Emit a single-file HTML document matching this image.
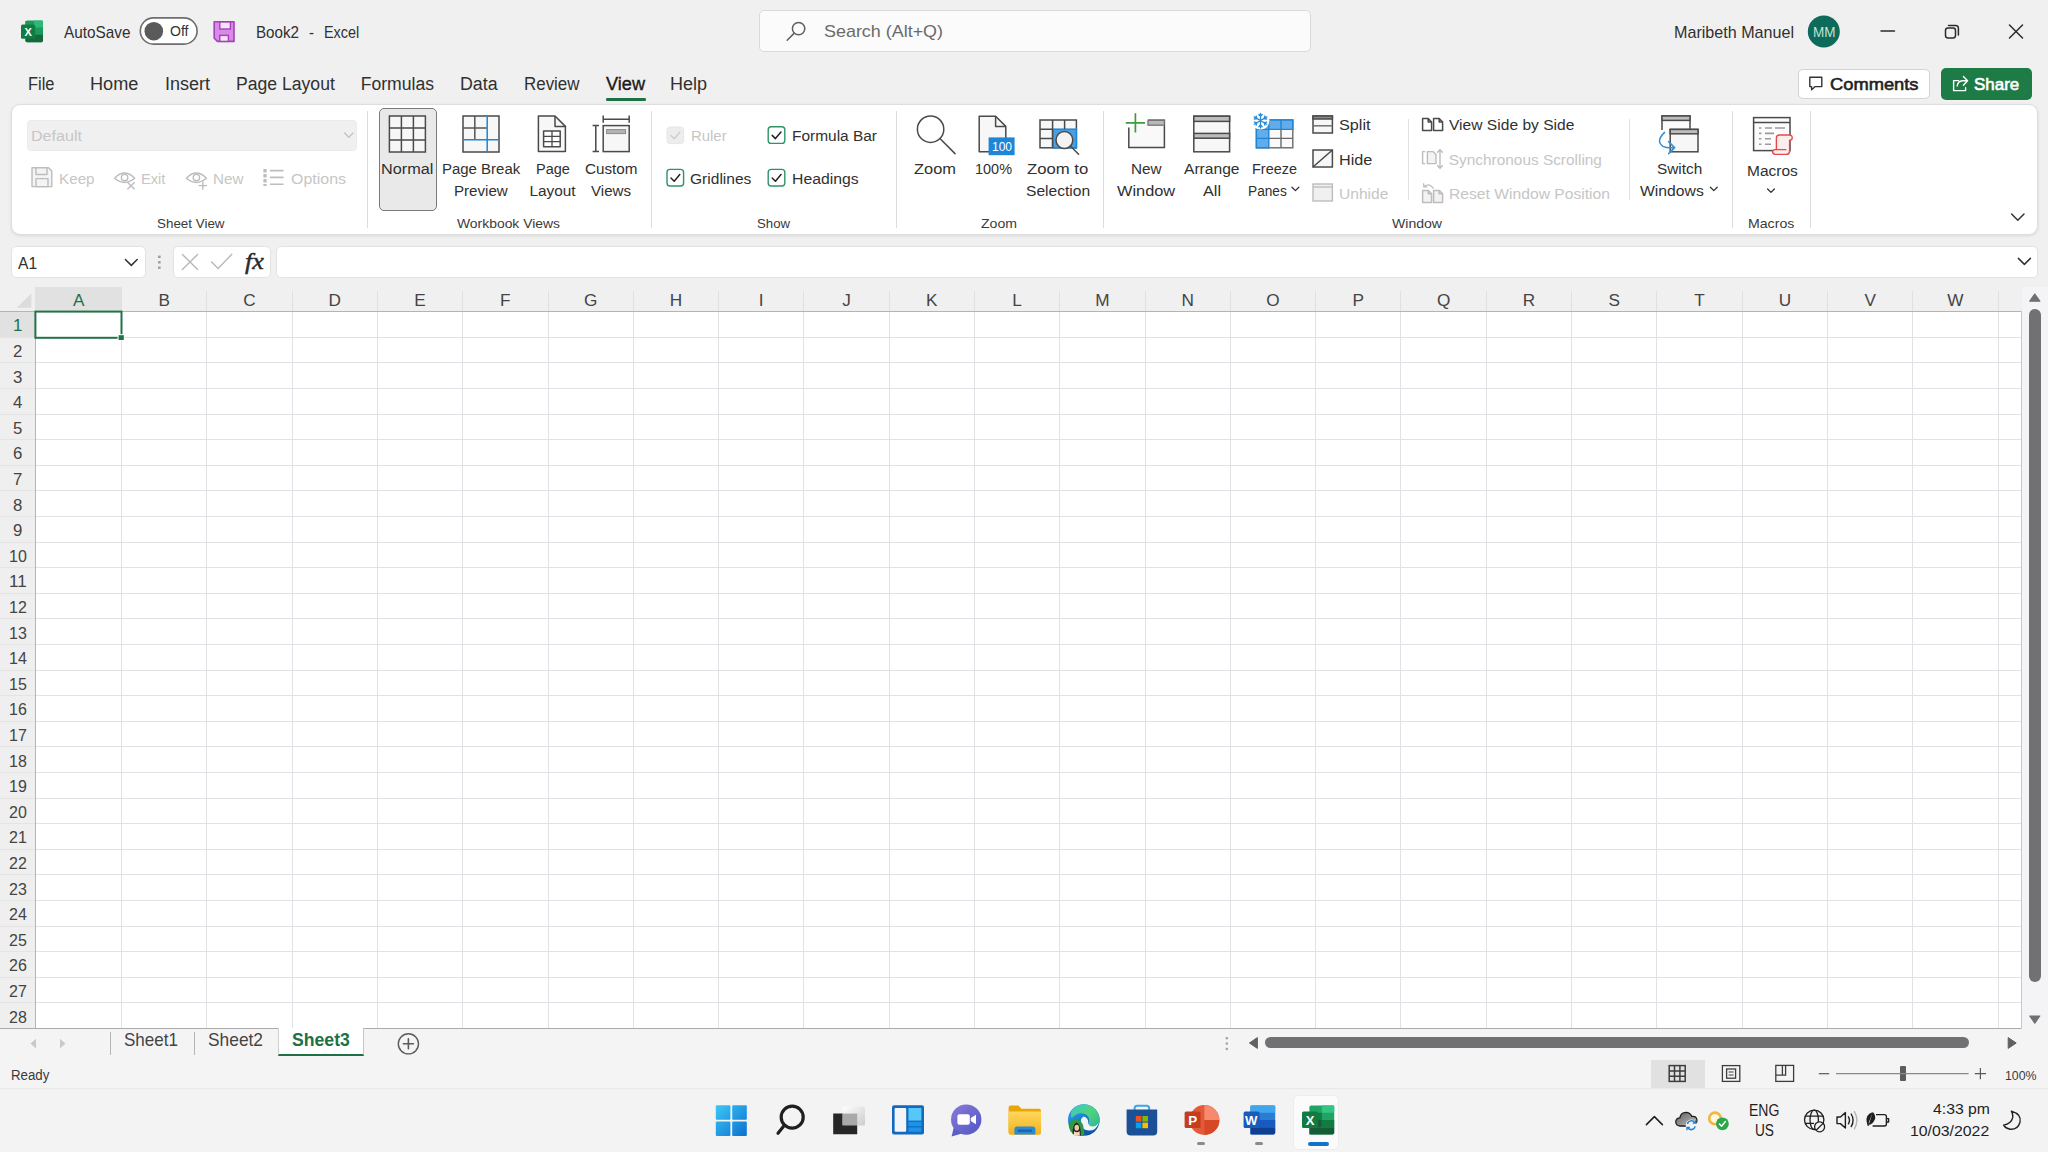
<!DOCTYPE html>
<html lang="en"><head><meta charset="utf-8"><title>Book2 - Excel</title>
<style>
html,body{margin:0;padding:0;}
body{width:2048px;height:1152px;overflow:hidden;background:#f0f0f0;font-family:"Liberation Sans", sans-serif;position:relative;}
#app{position:absolute;left:0;top:0;width:2048px;height:1152px;overflow:hidden;}
#app div{position:absolute;box-sizing:border-box;}
#app span{position:absolute;white-space:nowrap;line-height:1;transform-origin:0 50%;}
#ov{position:absolute;left:0;top:0;}
</style></head><body><div id="app">
<div style="left:0px;top:0px;width:2048px;height:104px;background:#f0f0f0;"></div>
<div style="left:11px;top:104px;width:2026.5px;height:131px;background:#ffffff;border-radius:9px;border:1px solid #dedede;box-shadow:0 1px 3px rgba(0,0,0,0.10);"></div>
<div style="left:11px;top:246px;width:134.5px;height:31.5px;background:#ffffff;border-radius:5px;border:1px solid #e3e3e3;"></div>
<div style="left:173px;top:246px;width:97.5px;height:31.5px;background:#ffffff;border-radius:5px;border:1px solid #e3e3e3;"></div>
<div style="left:276px;top:246px;width:1761.5px;height:31.5px;background:#ffffff;border-radius:5px;border:1px solid #e3e3e3;"></div>
<div style="left:0px;top:287px;width:2021px;height:24.75px;background:#f0f0f0;"></div>
<div style="left:0px;top:311.75px;width:35.5px;height:716.75px;background:#efefef;"></div>
<div style="left:35.5px;top:311.75px;width:1985.5px;height:716.75px;background:#ffffff;"></div>
<div style="left:35px;top:287px;width:87px;height:24.75px;background:#e1e1e1;"></div>
<div style="left:0px;top:311.75px;width:35.5px;height:25.6px;background:#e1e1e1;"></div>
<div style="left:2021.5px;top:287px;width:27px;height:742px;background:#f4f3f5;"></div>
<div style="left:35.5px;top:337px;width:1985.5px;height:1px;background:#e2e1e5;"></div>
<div style="left:0px;top:337px;width:35.5px;height:1px;background:#e4e4e4;"></div>
<div style="left:35.5px;top:362px;width:1985.5px;height:1px;background:#e2e1e5;"></div>
<div style="left:0px;top:362px;width:35.5px;height:1px;background:#e4e4e4;"></div>
<div style="left:35.5px;top:388px;width:1985.5px;height:1px;background:#e2e1e5;"></div>
<div style="left:0px;top:388px;width:35.5px;height:1px;background:#e4e4e4;"></div>
<div style="left:35.5px;top:414px;width:1985.5px;height:1px;background:#e2e1e5;"></div>
<div style="left:0px;top:414px;width:35.5px;height:1px;background:#e4e4e4;"></div>
<div style="left:35.5px;top:439px;width:1985.5px;height:1px;background:#e2e1e5;"></div>
<div style="left:0px;top:439px;width:35.5px;height:1px;background:#e4e4e4;"></div>
<div style="left:35.5px;top:465px;width:1985.5px;height:1px;background:#e2e1e5;"></div>
<div style="left:0px;top:465px;width:35.5px;height:1px;background:#e4e4e4;"></div>
<div style="left:35.5px;top:490px;width:1985.5px;height:1px;background:#e2e1e5;"></div>
<div style="left:0px;top:490px;width:35.5px;height:1px;background:#e4e4e4;"></div>
<div style="left:35.5px;top:516px;width:1985.5px;height:1px;background:#e2e1e5;"></div>
<div style="left:0px;top:516px;width:35.5px;height:1px;background:#e4e4e4;"></div>
<div style="left:35.5px;top:542px;width:1985.5px;height:1px;background:#e2e1e5;"></div>
<div style="left:0px;top:542px;width:35.5px;height:1px;background:#e4e4e4;"></div>
<div style="left:35.5px;top:567px;width:1985.5px;height:1px;background:#e2e1e5;"></div>
<div style="left:0px;top:567px;width:35.5px;height:1px;background:#e4e4e4;"></div>
<div style="left:35.5px;top:593px;width:1985.5px;height:1px;background:#e2e1e5;"></div>
<div style="left:0px;top:593px;width:35.5px;height:1px;background:#e4e4e4;"></div>
<div style="left:35.5px;top:618px;width:1985.5px;height:1px;background:#e2e1e5;"></div>
<div style="left:0px;top:618px;width:35.5px;height:1px;background:#e4e4e4;"></div>
<div style="left:35.5px;top:644px;width:1985.5px;height:1px;background:#e2e1e5;"></div>
<div style="left:0px;top:644px;width:35.5px;height:1px;background:#e4e4e4;"></div>
<div style="left:35.5px;top:670px;width:1985.5px;height:1px;background:#e2e1e5;"></div>
<div style="left:0px;top:670px;width:35.5px;height:1px;background:#e4e4e4;"></div>
<div style="left:35.5px;top:695px;width:1985.5px;height:1px;background:#e2e1e5;"></div>
<div style="left:0px;top:695px;width:35.5px;height:1px;background:#e4e4e4;"></div>
<div style="left:35.5px;top:721px;width:1985.5px;height:1px;background:#e2e1e5;"></div>
<div style="left:0px;top:721px;width:35.5px;height:1px;background:#e4e4e4;"></div>
<div style="left:35.5px;top:746px;width:1985.5px;height:1px;background:#e2e1e5;"></div>
<div style="left:0px;top:746px;width:35.5px;height:1px;background:#e4e4e4;"></div>
<div style="left:35.5px;top:772px;width:1985.5px;height:1px;background:#e2e1e5;"></div>
<div style="left:0px;top:772px;width:35.5px;height:1px;background:#e4e4e4;"></div>
<div style="left:35.5px;top:798px;width:1985.5px;height:1px;background:#e2e1e5;"></div>
<div style="left:0px;top:798px;width:35.5px;height:1px;background:#e4e4e4;"></div>
<div style="left:35.5px;top:823px;width:1985.5px;height:1px;background:#e2e1e5;"></div>
<div style="left:0px;top:823px;width:35.5px;height:1px;background:#e4e4e4;"></div>
<div style="left:35.5px;top:849px;width:1985.5px;height:1px;background:#e2e1e5;"></div>
<div style="left:0px;top:849px;width:35.5px;height:1px;background:#e4e4e4;"></div>
<div style="left:35.5px;top:874px;width:1985.5px;height:1px;background:#e2e1e5;"></div>
<div style="left:0px;top:874px;width:35.5px;height:1px;background:#e4e4e4;"></div>
<div style="left:35.5px;top:900px;width:1985.5px;height:1px;background:#e2e1e5;"></div>
<div style="left:0px;top:900px;width:35.5px;height:1px;background:#e4e4e4;"></div>
<div style="left:35.5px;top:926px;width:1985.5px;height:1px;background:#e2e1e5;"></div>
<div style="left:0px;top:926px;width:35.5px;height:1px;background:#e4e4e4;"></div>
<div style="left:35.5px;top:951px;width:1985.5px;height:1px;background:#e2e1e5;"></div>
<div style="left:0px;top:951px;width:35.5px;height:1px;background:#e4e4e4;"></div>
<div style="left:35.5px;top:977px;width:1985.5px;height:1px;background:#e2e1e5;"></div>
<div style="left:0px;top:977px;width:35.5px;height:1px;background:#e4e4e4;"></div>
<div style="left:35.5px;top:1002px;width:1985.5px;height:1px;background:#e2e1e5;"></div>
<div style="left:0px;top:1002px;width:35.5px;height:1px;background:#e4e4e4;"></div>
<div style="left:121px;top:311.75px;width:1px;height:716.75px;background:#e2e1e5;"></div>
<div style="left:121px;top:291px;width:1px;height:20.75px;background:#e0e0e0;"></div>
<div style="left:206px;top:311.75px;width:1px;height:716.75px;background:#e2e1e5;"></div>
<div style="left:206px;top:291px;width:1px;height:20.75px;background:#e0e0e0;"></div>
<div style="left:292px;top:311.75px;width:1px;height:716.75px;background:#e2e1e5;"></div>
<div style="left:292px;top:291px;width:1px;height:20.75px;background:#e0e0e0;"></div>
<div style="left:377px;top:311.75px;width:1px;height:716.75px;background:#e2e1e5;"></div>
<div style="left:377px;top:291px;width:1px;height:20.75px;background:#e0e0e0;"></div>
<div style="left:462px;top:311.75px;width:1px;height:716.75px;background:#e2e1e5;"></div>
<div style="left:462px;top:291px;width:1px;height:20.75px;background:#e0e0e0;"></div>
<div style="left:548px;top:311.75px;width:1px;height:716.75px;background:#e2e1e5;"></div>
<div style="left:548px;top:291px;width:1px;height:20.75px;background:#e0e0e0;"></div>
<div style="left:633px;top:311.75px;width:1px;height:716.75px;background:#e2e1e5;"></div>
<div style="left:633px;top:291px;width:1px;height:20.75px;background:#e0e0e0;"></div>
<div style="left:718px;top:311.75px;width:1px;height:716.75px;background:#e2e1e5;"></div>
<div style="left:718px;top:291px;width:1px;height:20.75px;background:#e0e0e0;"></div>
<div style="left:803px;top:311.75px;width:1px;height:716.75px;background:#e2e1e5;"></div>
<div style="left:803px;top:291px;width:1px;height:20.75px;background:#e0e0e0;"></div>
<div style="left:889px;top:311.75px;width:1px;height:716.75px;background:#e2e1e5;"></div>
<div style="left:889px;top:291px;width:1px;height:20.75px;background:#e0e0e0;"></div>
<div style="left:974px;top:311.75px;width:1px;height:716.75px;background:#e2e1e5;"></div>
<div style="left:974px;top:291px;width:1px;height:20.75px;background:#e0e0e0;"></div>
<div style="left:1059px;top:311.75px;width:1px;height:716.75px;background:#e2e1e5;"></div>
<div style="left:1059px;top:291px;width:1px;height:20.75px;background:#e0e0e0;"></div>
<div style="left:1145px;top:311.75px;width:1px;height:716.75px;background:#e2e1e5;"></div>
<div style="left:1145px;top:291px;width:1px;height:20.75px;background:#e0e0e0;"></div>
<div style="left:1230px;top:311.75px;width:1px;height:716.75px;background:#e2e1e5;"></div>
<div style="left:1230px;top:291px;width:1px;height:20.75px;background:#e0e0e0;"></div>
<div style="left:1315px;top:311.75px;width:1px;height:716.75px;background:#e2e1e5;"></div>
<div style="left:1315px;top:291px;width:1px;height:20.75px;background:#e0e0e0;"></div>
<div style="left:1400px;top:311.75px;width:1px;height:716.75px;background:#e2e1e5;"></div>
<div style="left:1400px;top:291px;width:1px;height:20.75px;background:#e0e0e0;"></div>
<div style="left:1486px;top:311.75px;width:1px;height:716.75px;background:#e2e1e5;"></div>
<div style="left:1486px;top:291px;width:1px;height:20.75px;background:#e0e0e0;"></div>
<div style="left:1571px;top:311.75px;width:1px;height:716.75px;background:#e2e1e5;"></div>
<div style="left:1571px;top:291px;width:1px;height:20.75px;background:#e0e0e0;"></div>
<div style="left:1656px;top:311.75px;width:1px;height:716.75px;background:#e2e1e5;"></div>
<div style="left:1656px;top:291px;width:1px;height:20.75px;background:#e0e0e0;"></div>
<div style="left:1742px;top:311.75px;width:1px;height:716.75px;background:#e2e1e5;"></div>
<div style="left:1742px;top:291px;width:1px;height:20.75px;background:#e0e0e0;"></div>
<div style="left:1827px;top:311.75px;width:1px;height:716.75px;background:#e2e1e5;"></div>
<div style="left:1827px;top:291px;width:1px;height:20.75px;background:#e0e0e0;"></div>
<div style="left:1912px;top:311.75px;width:1px;height:716.75px;background:#e2e1e5;"></div>
<div style="left:1912px;top:291px;width:1px;height:20.75px;background:#e0e0e0;"></div>
<div style="left:1998px;top:311.75px;width:1px;height:716.75px;background:#e2e1e5;"></div>
<div style="left:1998px;top:291px;width:1px;height:20.75px;background:#e0e0e0;"></div>
<div style="left:0px;top:311px;width:2021px;height:1px;background:#b4b4b4;"></div>
<div style="left:35px;top:311px;width:1px;height:717.5px;background:#b4b4b4;"></div>
<div style="left:2020.5px;top:311px;width:1px;height:717.5px;background:#c8c8c8;"></div>
<div style="left:0px;top:1028px;width:2021px;height:1px;background:#ababab;"></div>
<div style="left:0px;top:1029px;width:2048px;height:30px;background:#f5f4f5;"></div>
<div style="left:0px;top:1059px;width:2048px;height:30px;background:#f5f4f5;"></div>
<div style="left:0px;top:1088px;width:2048px;height:1px;background:#e9e9ea;"></div>
<div style="left:0px;top:1089.5px;width:2048px;height:63px;background:#f3f3f4;"></div>
<div style="left:759px;top:10px;width:551.5px;height:41.5px;background:#fbfbfb;border-radius:5px;border:1px solid #dadada;"></div>
<div style="left:606px;top:98px;width:40px;height:2.6px;background:#1e7145;border-radius:1.3px;"></div>
<div style="left:1797.5px;top:68.5px;width:132.5px;height:30.5px;background:#ffffff;border-radius:5px;border:1px solid #d4d4d4;"></div>
<div style="left:1941px;top:67.5px;width:91px;height:32px;background:#1d7c46;border-radius:5px;"></div>
<div style="left:2029px;top:308.5px;width:12px;height:673.2px;background:#717073;border-radius:6px;"></div>
<div style="left:1265px;top:1037px;width:704px;height:11px;background:#717073;border-radius:5.5px;"></div>
<div style="left:110px;top:1032px;width:1px;height:22.5px;background:#b5b5b5;"></div>
<div style="left:194px;top:1032px;width:1px;height:22.5px;background:#b5b5b5;"></div>
<div style="left:278px;top:1028px;width:85.5px;height:28px;background:#ffffff;border-left:1px solid #cfcfcf;border-right:1px solid #c6c6c6;border-bottom:2.5px solid #1e7145;"></div>
<div style="left:1651px;top:1060px;width:54px;height:28px;background:#e1e1e1;"></div>
<div style="left:1899.6px;top:1066px;width:6.2px;height:15.4px;background:#5c5c5c;border-radius:1px;"></div>
<div style="left:367px;top:111px;width:1px;height:117px;background:#dcdcdc;"></div>
<div style="left:651px;top:111px;width:1px;height:117px;background:#dcdcdc;"></div>
<div style="left:896px;top:111px;width:1px;height:117px;background:#dcdcdc;"></div>
<div style="left:1103px;top:111px;width:1px;height:117px;background:#dcdcdc;"></div>
<div style="left:1732.3px;top:111px;width:1px;height:117px;background:#dcdcdc;"></div>
<div style="left:1810.1px;top:111px;width:1px;height:117px;background:#dcdcdc;"></div>
<div style="left:1407.5px;top:119px;width:1px;height:81px;background:#e2e2e2;"></div>
<div style="left:1629.1px;top:119px;width:1px;height:81px;background:#e2e2e2;"></div>
<div style="left:27px;top:119.5px;width:330px;height:31px;background:#f1f0f1;border-radius:4px;border:1px solid #ebebeb;"></div>
<div style="left:378.6px;top:108px;width:58.5px;height:102.6px;background:#e9e9e9;border-radius:5px;border:1.2px solid #7a7a7a;"></div>
<div style="left:1197px;top:1141.6px;width:8px;height:3.4px;background:#8b8b8b;border-radius:2px;"></div>
<div style="left:1255.4px;top:1141.6px;width:8px;height:3.4px;background:#8b8b8b;border-radius:2px;"></div>
<div style="left:1293px;top:1095px;width:46.4px;height:55px;background:#fbfbfb;border-radius:5px;border:1px solid #ececec;"></div>
<div style="left:1307.6px;top:1141.6px;width:21.4px;height:4px;background:#1273cc;border-radius:2px;"></div>
<svg id="ov" width="2048" height="1152" viewBox="0 0 2048 1152">
<path d="M31.4 293.2 L31.4 307.8 L16.8 307.8 Z" fill="#dcdcdc"/>
<rect x="35.4" y="311.6" width="86.1" height="26.2" fill="none" stroke="#217346" stroke-width="2"/><rect x="117.6" y="334.2" width="6.8" height="6.4" fill="#ffffff"/><rect x="118.6" y="335.2" width="5.2" height="4.8" fill="#217346"/>
<g><rect x="25.4" y="20.6" width="17.6" height="21.6" rx="1.6" fill="#1c9a5c"/><rect x="34" y="20.6" width="9" height="7.2" fill="#2db877"/><rect x="25.4" y="21" width="8.6" height="6.8" fill="#1c9a5c"/><rect x="25.4" y="27.6" width="8.6" height="7.2" fill="#107c41"/><rect x="34" y="27.6" width="9" height="7.2" fill="#1c9a5c"/><path d="M25.4 34.8 H43 V40.6 Q43 42.2 41.4 42.2 H27 Q25.4 42.2 25.4 40.6 Z" fill="#17683c"/><rect x="21" y="24.4" width="14.2" height="14.4" rx="1.5" fill="#107c41"/></g>
<rect x="140.3" y="17.9" width="56.8" height="26.2" rx="13.1" fill="#ffffff" stroke="#6e6e6e" stroke-width="1.6"/>
<circle cx="153.8" cy="31.2" r="9.3" fill="#5a5a5a"/>
<g><path d="M214.2 21.7 H234 V41.4 H217.4 L214.2 38.2 Z" fill="#d88ae8" stroke="#a740ba" stroke-width="1.6" stroke-linejoin="round"/><rect x="219.8" y="22" width="10.6" height="7" fill="#f3e6f7" stroke="#a740ba" stroke-width="1.4"/><rect x="219.8" y="35.4" width="8.6" height="6" fill="#f3e6f7" stroke="#a740ba" stroke-width="1.4"/></g>
<g fill="none" stroke="#5f5f5f" stroke-width="1.5"><circle cx="798.6" cy="28.6" r="6.2"/><path d="M794 33.4 L787.2 40.2" stroke-linecap="round"/></g>
<circle cx="1823.8" cy="31.5" r="16" fill="#0e6a5b"/>
<g fill="none" stroke="#2b2b2b" stroke-width="1.5" stroke-linecap="round"><path d="M1881 31 H1894.5"/><rect x="1945.5" y="28" width="10" height="10" rx="2.4"/><path d="M1948.5 25.4 H1955.6 Q1958.4 25.4 1958.4 28.2 V35"/><path d="M2009.5 25 L2022.5 38 M2022.5 25 L2009.5 38"/></g>
<path d="M1809.8 77.2 H1821.8 V86.6 H1815.2 L1811.6 89.8 V86.6 H1809.8 Z" fill="none" stroke="#333" stroke-width="1.4" stroke-linejoin="round"/>
<g fill="none" stroke="#ffffff" stroke-width="1.4" stroke-linejoin="round" stroke-linecap="round"><path d="M1958.6 80.6 H1953.6 V90.6 H1965.6 V87.8"/><path d="M1963.4 76.4 L1967.6 80.8 L1963.4 85.2 M1967 80.8 H1962.4 Q1957.8 81.2 1957.2 86"/></g>
<path d="M125.4 259.5 L131.3 265.4 L137.2 259.5" fill="none" stroke="#333" stroke-width="1.5" stroke-linecap="round" stroke-linejoin="round"/>
<g fill="#9c9c9c"><rect x="158.1" y="255.6" width="2.5" height="2.4"/><rect x="158.1" y="261.1" width="2.5" height="2.4"/><rect x="158.1" y="266.5" width="2.5" height="2.4"/></g>
<g fill="none" stroke="#b9b9b9" stroke-width="1.4" stroke-linecap="round" stroke-linejoin="round"><path d="M182.4 254.4 L197.6 269.6 M197.6 254.4 L182.4 269.6"/><path d="M211.6 262 L218.1 268.6 L231.8 254.2"/></g>
<path d="M2018.4 258.4 L2024.4 264.4 L2030.4 258.4" fill="none" stroke="#333" stroke-width="1.5" stroke-linecap="round" stroke-linejoin="round"/>
<path d="M2029.8 301.2 L2034.8 294 L2039.8 301.2 Z" fill="#707070" stroke="#707070" stroke-width="1.2" stroke-linejoin="round"/>
<path d="M2029.8 1016 L2034.8 1023.2 L2039.8 1016 Z" fill="#707070" stroke="#707070" stroke-width="1.2" stroke-linejoin="round"/>
<g fill="#a6a6a6"><rect x="1225.7" y="1037" width="2.3" height="2.3"/><rect x="1225.7" y="1042.4" width="2.3" height="2.3"/><rect x="1225.7" y="1047.8" width="2.3" height="2.3"/></g>
<path d="M1257.4 1037.6 L1249.4 1043 L1257.4 1048.4 Z" fill="#606060" stroke="#606060" stroke-width="1" stroke-linejoin="round"/>
<path d="M2008.2 1037.6 L2016.2 1043 L2008.2 1048.4 Z" fill="#606060" stroke="#606060" stroke-width="1" stroke-linejoin="round"/>
<path d="M36 1038.8 L30.6 1043.6 L36 1048.4 Z" fill="#c9c9c9"/><path d="M60 1038.8 L65.4 1043.6 L60 1048.4 Z" fill="#c9c9c9"/>
<g fill="none" stroke="#5b5b5b" stroke-width="1.4" stroke-linecap="round"><circle cx="408.4" cy="1043.8" r="10.1"/><path d="M403.4 1043.8 H413.4 M408.4 1038.8 V1048.8" stroke-width="1.6"/></g>
<g fill="none" stroke="#3d3d3d" stroke-width="1.5"><rect x="1669.2" y="1065.6" width="16" height="15.8"/><path d="M1674.5 1065.6 V1081.4 M1679.9 1065.6 V1081.4 M1669.2 1070.9 H1685.2 M1669.2 1076.2 H1685.2"/></g>
<g fill="none" stroke="#3d3d3d" stroke-width="1.3"><rect x="1722.4" y="1065.6" width="17.4" height="15.8"/><rect x="1726.6" y="1069" width="9" height="9.2"/><path d="M1728.6 1072 H1733.6 M1728.6 1075 H1733.6" stroke-width="1"/></g>
<g fill="none" stroke="#3d3d3d" stroke-width="1.3"><rect x="1775.8" y="1065.4" width="17.8" height="16"/><path d="M1782.4 1065.4 V1075.2 M1785.6 1065.4 V1075.2 H1775.8" /></g>
<g fill="none" stroke="#5a5a5a" stroke-width="1.2"><path d="M1818.8 1073.7 H1829.2"/><path d="M1836 1073.7 H1968.6" stroke="#8a8a8a"/><path d="M1974.8 1073.7 H1986 M1980.4 1068.1 V1079.3"/></g>
<path d="M2011.6 214 L2017.8 220.2 L2024 214" fill="none" stroke="#333" stroke-width="1.5" stroke-linecap="round" stroke-linejoin="round"/>
<path d="M344.6 133 L348.8 137.2 L353 133" fill="none" stroke="#c2c2c2" stroke-width="1.3" stroke-linecap="round" stroke-linejoin="round"/>
<g fill="#f4f4f4" stroke="#bdbdbd" stroke-width="1.4" stroke-linejoin="round"><path d="M32 167.7 H48.6 L51.8 170.9 V186.6 H32 Z"/><rect x="36" y="167.9" width="11" height="6.6"/><rect x="36" y="178.6" width="12" height="8"/></g>
<path d="M114.6 178.2 Q124.6 167.7 134.6 178.2 Q124.6 186.6 114.6 178.2 Z" fill="none" stroke="#bdbdbd" stroke-width="1.4" stroke-linejoin="round"/><circle cx="124.6" cy="177.6" r="3.2" fill="none" stroke="#bdbdbd" stroke-width="1.4"/><path d="M127.4 182.2 L134.6 189.2 M134.6 182.2 L127.4 189.2" stroke="#bdbdbd" stroke-width="1.4" fill="none"/>
<path d="M186.4 178.2 Q196.4 167.7 206.4 178.2 Q196.4 186.6 186.4 178.2 Z" fill="none" stroke="#bdbdbd" stroke-width="1.4" stroke-linejoin="round"/><circle cx="196.4" cy="177.6" r="3.2" fill="none" stroke="#bdbdbd" stroke-width="1.4"/><path d="M198.6 185.6 H207 M202.8 181.4 V189.8" stroke="#bdbdbd" stroke-width="1.4" fill="none"/>
<g stroke="#bdbdbd" stroke-width="1.6" fill="none"><path d="M270 170.6 H283.6 M270 177.4 H283.6 M270 184.2 H283.6"/><path d="M265 169 V186" stroke-width="3.2" stroke-dasharray="3.6 1.4"/></g>
<g fill="#f7f7f7" stroke="#4a4a4a" stroke-width="1.5"><rect x="389.4" y="116" width="36" height="36"/><path d="M401.4 116 V152 M413.4 116 V152 M389.4 128 H425.4 M389.4 140 H425.4" fill="none"/></g>
<g fill="none" stroke-width="1.5"><rect x="463" y="116" width="36" height="36" fill="#f7f7f7" stroke="#4a4a4a"/><path d="M474.8 116 V139.8 M463 128 H487.2" stroke="#555"/><path d="M487.2 116 V152 M463 139.8 H499" stroke="#1e86d6"/></g>
<g fill="#f7f7f7" stroke="#4a4a4a" stroke-width="1.5" stroke-linejoin="round"><path d="M538.4 116 H555 L565.4 126.4 V151.6 H538.4 Z"/><path d="M555 116 V126.4 H565.4" fill="none"/><rect x="543.6" y="131" width="16.6" height="15.8" fill="#fff"/><path d="M552 131 V146.8 M543.6 136.3 H560.2 M543.6 141.6 H560.2" fill="none" stroke-width="1.3"/></g>
<g fill="none" stroke="#4a4a4a" stroke-width="1.5"><path d="M595.8 125.6 V151.6 M592.6 125.6 H599 M592.6 151.6 H599"/><path d="M603.2 119.2 H629.2 M603.2 115.6 V122.8 M629.2 115.6 V122.8"/><rect x="603.2" y="125.6" width="26" height="26" fill="#f7f7f7"/><rect x="606.6" y="129.6" width="19" height="4" fill="#b4b4b4" stroke="#8a8a8a" stroke-width="1"/></g>
<rect x="667" y="127" width="16.6" height="16.6" rx="3" fill="#ededed" stroke="#e6e6e6" stroke-width="1"/><path d="M671 135.6 L674.2 138.8 L679.8 132.2" fill="none" stroke="#cfcfcf" stroke-width="1.5" stroke-linecap="round" stroke-linejoin="round"/>
<rect x="768.2" y="126.8" width="16.6" height="16.6" rx="3" fill="#ffffff" stroke="#2e9468" stroke-width="1.4"/><path d="M772.2 135.4 L775.4000000000001 138.6 L781.0 132.0" fill="none" stroke="#222" stroke-width="1.5" stroke-linecap="round" stroke-linejoin="round"/>
<rect x="667" y="169.4" width="16.6" height="16.6" rx="3" fill="#ffffff" stroke="#2e9468" stroke-width="1.4"/><path d="M671 178.0 L674.2 181.20000000000002 L679.8 174.6" fill="none" stroke="#222" stroke-width="1.5" stroke-linecap="round" stroke-linejoin="round"/>
<rect x="768.2" y="169.4" width="16.6" height="16.6" rx="3" fill="#ffffff" stroke="#2e9468" stroke-width="1.4"/><path d="M772.2 178.0 L775.4000000000001 181.20000000000002 L781.0 174.6" fill="none" stroke="#222" stroke-width="1.5" stroke-linecap="round" stroke-linejoin="round"/>
<g fill="none" stroke="#4a4a4a" stroke-width="1.5" stroke-linecap="round"><circle cx="930.6" cy="129.2" r="13.2"/><path d="M940.2 138.8 L955 153.6"/></g>
<g fill="#f7f7f7" stroke="#4a4a4a" stroke-width="1.5" stroke-linejoin="round"><path d="M979.2 116.2 H995.6 L1005.8 126.4 V151.8 H979.2 Z"/><path d="M995.6 116.2 V126.4 H1005.8" fill="none"/></g>
<rect x="988.6" y="137.4" width="26" height="17.8" fill="#1e86d6"/>
<g fill="none" stroke="#4a4a4a" stroke-width="1.5"><rect x="1040" y="120" width="36.4" height="27.8" fill="#f7f7f7"/><rect x="1052.6" y="129.2" width="23.8" height="18.6" fill="#4a9fe3" stroke="#1e86d6"/><path d="M1052.6 120 V147.8 M1064.6 120 V129 M1040 129.2 H1052.6 M1040 138.4 H1052.6"/><circle cx="1064.4" cy="140" r="8.4" fill="#f3f3f3"/><path d="M1070.4 146 L1078.6 154.2" stroke-linecap="round"/></g>
<g fill="none" stroke="#4a4a4a" stroke-width="1.5"><path d="M1128.8 127.4 V147.6 H1164.4 V120.2 H1148" fill="#f8f9f8"/><rect x="1148" y="120.2" width="16.4" height="5" fill="#b9b9b9" stroke="#6d6d6d" stroke-width="1.2"/><path d="M1125.8 122.8 H1145 M1135.4 113.2 V132.4" stroke="#3e9b3e" stroke-width="1.7"/></g>
<g fill="#f7f7f7" stroke="#4a4a4a" stroke-width="1.5"><rect x="1193.8" y="116.2" width="35.8" height="35.6"/><rect x="1193.8" y="116.2" width="35.8" height="5.2" fill="#bdbdbd"/><rect x="1193.8" y="133.4" width="35.8" height="4.8" fill="#bdbdbd"/></g>
<g stroke-width="1.4" fill="none"><rect x="1256.4" y="120" width="36.4" height="27.8" fill="#fafafa" stroke="#6a6a6a"/><path d="M1281 129.4 V147.8 M1268.8 138.4 H1292.8" stroke="#6a6a6a"/><path d="M1256.4 120 H1292.8 V129.4 H1268.8 V147.8 H1256.4 Z" fill="#63acea" stroke="#1e86d6"/><path d="M1268.8 120 V129.4 H1256.4 M1281 120 V129.4 M1256.4 138.4 H1268.8" stroke="#1e86d6"/><circle cx="1260.5" cy="120.6" r="9" fill="#ffffff" stroke="none"/><path d="M1260.5 113.3 L1260.5 127.9 M1266.8 116.9 L1254.2 124.2 M1266.8 124.2 L1254.2 116.9 M1260.5 124.8 L1262.2 126.7 M1260.5 124.8 L1258.8 126.7 M1256.9 122.7 L1256.1 125.2 M1256.9 122.7 L1254.3 122.2 M1256.9 118.5 L1254.3 119.0 M1256.9 118.5 L1256.1 116.0 M1260.5 116.4 L1258.8 114.5 M1260.5 116.4 L1262.2 114.5 M1264.1 118.5 L1264.9 116.0 M1264.1 118.5 L1266.7 119.0 M1264.1 122.7 L1266.7 122.2 M1264.1 122.7 L1264.9 125.2" stroke="#2b8cd6" stroke-width="1.3" stroke-linecap="round"/></g>
<path d="M1292 187.2 L1295.4 190.6 L1298.8 187.2" fill="none" stroke="#333" stroke-width="1.3" stroke-linecap="round" stroke-linejoin="round"/>
<g fill="#f7f7f7" stroke="#4a4a4a" stroke-width="1.5"><rect x="1313" y="116" width="19.4" height="17"/><rect x="1313" y="116" width="19.4" height="3" fill="#8a8a8a"/><path d="M1313 125.8 H1332.4" stroke="#6f6f6f"/></g>
<g fill="#f7f7f7" stroke="#4a4a4a" stroke-width="1.5"><rect x="1313" y="150" width="19.4" height="17"/><path d="M1313 167 L1332.4 150"/></g>
<g fill="#f0f0f0" stroke="#bdbdbd" stroke-width="1.4"><rect x="1313" y="184" width="19.4" height="17"/><path d="M1313 187 H1332.4"/></g>
<g fill="#ffffff" stroke="#4a4a4a" stroke-width="1.5" stroke-linejoin="round"><path d="M1422.6 118.6 H1428.1999999999998 L1431.6 122.0 V130.6 H1422.6 Z"/><path d="M1428.1999999999998 118.6 V122.0 H1431.6" fill="none"/><path d="M1433.6 118.6 H1439.1999999999998 L1442.6 122.0 V130.6 H1433.6 Z"/><path d="M1439.1999999999998 118.6 V122.0 H1442.6" fill="none"/></g>
<g fill="none" stroke="#bdbdbd" stroke-width="1.4" stroke-linejoin="round"><path d="M1425.2 151.6 H1422.6 V163.6 H1425.2"/><path d="M1427.4 151.6 H1433 L1436 154.6 V163.6 H1427.4 Z" fill="#f3f3f3"/><path d="M1440 150 V168 M1437.2 152.8 L1440 149.6 L1442.8 152.8 M1437.2 165.2 L1440 168.4 L1442.8 165.2"/></g>
<g fill="#f3f3f3" stroke="#bdbdbd" stroke-width="1.5" stroke-linejoin="round"><path d="M1422.6 190.4 H1428.1999999999998 L1431.6 193.8 V202.4 H1422.6 Z"/><path d="M1428.1999999999998 190.4 V193.8 H1431.6" fill="none"/><path d="M1433.6 190.4 H1439.1999999999998 L1442.6 193.8 V202.4 H1433.6 Z"/><path d="M1439.1999999999998 190.4 V193.8 H1442.6" fill="none"/></g><path d="M1424 186.4 Q1430 182.6 1433.4 188.6 M1423.6 183.2 L1423.8 186.8 L1427.4 186.8" fill="none" stroke="#bdbdbd" stroke-width="1.3"/>
<g fill="#f7f7f7" stroke="#4a4a4a" stroke-width="1.5"><path d="M1662 130 V116 H1690 V129" fill="#fbfbfb"/><rect x="1662" y="116" width="28" height="4.4" fill="#bdbdbd"/><rect x="1670.2" y="129.4" width="27.8" height="22.4"/><rect x="1670.2" y="129.4" width="27.8" height="4.4" fill="#bdbdbd"/><path d="M1664.6 132.4 Q1655.4 141 1663 146.4 Q1667 148.4 1674 147.6 M1668.6 141.6 L1674.6 147.6 L1668.6 153.6" fill="none" stroke="#2f8fd8" stroke-linecap="round" stroke-linejoin="round"/></g>
<path d="M1710.4 187.2 L1713.8 190.6 L1717.2 187.2" fill="none" stroke="#333" stroke-width="1.3" stroke-linecap="round" stroke-linejoin="round"/>
<g fill="#fcfcfc" stroke="#4a4a4a" stroke-width="1.5"><rect x="1753.6" y="117.6" width="36.4" height="33"/><path d="M1753.6 122.6 H1790"/><path d="M1759 128 H1761.4 M1765 128 H1772 M1775 128 H1785 M1759 133.4 H1761.4 M1765 133.4 H1774 M1759 138.8 H1761.4 M1765 138.8 H1771 M1759 144.2 H1761.4 M1765 144.2 H1771" stroke="#9a9a9a" stroke-width="1.6"/><path d="M1776.4 149.6 V137.8 Q1776.4 135 1779.2 135 H1789.4 Q1792.4 135.2 1792.2 138.2 Q1792 140.2 1789.6 140.2 V151.4 Q1789.4 154.4 1786.4 154.4 H1775.2 Q1772.6 154.2 1772.6 151.8 Q1772.8 149.6 1775.2 149.6 H1786.4" fill="#fdeeee" stroke="#e5484d" stroke-width="1.4" stroke-linejoin="round"/></g>
<path d="M1767.6 189 L1771 192.4 L1774.4 189" fill="none" stroke="#333" stroke-width="1.3" stroke-linecap="round" stroke-linejoin="round"/>
<defs><linearGradient id="gw" gradientUnits="userSpaceOnUse" x1="716" y1="1105" x2="747" y2="1136"><stop offset="0" stop-color="#3cc8f4"/><stop offset="1" stop-color="#0b6fd0"/></linearGradient><linearGradient id="gf" x1="0" y1="0" x2="0" y2="1"><stop offset="0" stop-color="#ffd75e"/><stop offset="1" stop-color="#f2b21c"/></linearGradient><linearGradient id="gc" x1="0" y1="0" x2="1" y2="1"><stop offset="0" stop-color="#8a7ad8"/><stop offset="1" stop-color="#4f57c4"/></linearGradient><linearGradient id="ge" x1="0" y1="0" x2="0.6" y2="1"><stop offset="0" stop-color="#37aeea"/><stop offset="0.5" stop-color="#1d80d2"/><stop offset="1" stop-color="#0f4f9e"/></linearGradient><linearGradient id="ge2" x1="0" y1="0" x2="1" y2="1"><stop offset="0" stop-color="#3cc6d0"/><stop offset="0.5" stop-color="#4fd47c"/><stop offset="1" stop-color="#2fb59a"/></linearGradient><linearGradient id="gt" x1="0" y1="0" x2="1" y2="1"><stop offset="0" stop-color="#ffffff"/><stop offset="1" stop-color="#c9c9c9"/></linearGradient><linearGradient id="gcl" x1="0" y1="0" x2="1" y2="1"><stop offset="0" stop-color="#5e5e5e"/><stop offset="0.6" stop-color="#9a9a9a"/><stop offset="1" stop-color="#d8d8d8"/></linearGradient></defs>
<g fill="url(#gw)"><rect x="715.8" y="1105.2" width="14.6" height="14.6" rx="1"/><rect x="732.2" y="1105.2" width="14.6" height="14.6" rx="1"/><rect x="715.8" y="1121.4" width="14.6" height="14.6" rx="1"/><rect x="732.2" y="1121.4" width="14.6" height="14.6" rx="1"/></g>
<g fill="none" stroke="#1f1f1f" stroke-width="3.2" stroke-linecap="round"><circle cx="792.2" cy="1117.2" r="11"/><path d="M784.4 1125.2 L778 1133.2"/></g>
<rect x="842.4" y="1106.4" width="22.6" height="19" rx="1.5" fill="url(#gt)" opacity="0.9"/><path d="M833.2 1113.6 H842.6 V1125.2 H857.2 V1134.2 H833.2 Z" fill="#262626"/><rect x="842.6" y="1113.6" width="14.6" height="11.6" fill="#a9a9a9"/>
<rect x="892" y="1105.2" width="32" height="29.4" rx="2" fill="#1368c0"/><rect x="894.6" y="1108" width="11.6" height="23.8" rx="1" fill="#f2f4f6"/><rect x="908.4" y="1108" width="13" height="12.6" fill="#56c7f7"/><rect x="908.4" y="1121.8" width="13" height="4.4" fill="#1c93e4"/><rect x="908.4" y="1127.4" width="13" height="4.4" fill="#1c93e4"/>
<circle cx="966.2" cy="1119.6" r="15.2" fill="url(#gc)"/><path d="M953.6 1128 L951.6 1136.6 L962 1133.6 Z" fill="#5a5fc8"/><rect x="957.4" y="1114.2" width="12.4" height="10.6" rx="2" fill="#ffffff"/><path d="M970.8 1118 L976 1114.8 V1124.2 L970.8 1121 Z" fill="#ffffff"/>
<path d="M1008.6 1107.6 Q1008.6 1105.6 1010.6 1105.6 H1018.4 L1021.4 1108.8 H1039 Q1041 1108.8 1041 1110.8 V1132.6 Q1041 1134.6 1039 1134.6 H1010.6 Q1008.6 1134.6 1008.6 1132.6 Z" fill="#e8a704"/><path d="M1008.6 1111.4 H1041 V1132.6 Q1041 1134.6 1039 1134.6 H1010.6 Q1008.6 1134.6 1008.6 1132.6 Z" fill="url(#gf)"/><path d="M1014.4 1134.6 V1129.4 Q1014.4 1126.6 1017.2 1126.6 H1032.6 Q1035.4 1126.6 1035.4 1129.4 V1134.6 Z" fill="#2b8ad6"/><rect x="1017.6" y="1129.6" width="14.6" height="2.4" rx="1.2" fill="#1465b4"/>
<circle cx="1083.8" cy="1120" r="15.8" fill="url(#ge)"/><path d="M1072.6 1109 A15.8 15.8 0 0 1 1099.5 1122.6 Q1097.4 1127.4 1092 1127 Q1088.2 1126.4 1089 1122.4 Q1090.4 1115.4 1083.4 1113.4 Q1076.4 1112.4 1071.6 1118 Q1070 1113 1072.6 1109 Z" fill="url(#ge2)"/><path d="M1083.4 1116.4 Q1088.6 1117.6 1088.2 1122.6 Q1088.6 1126.6 1092.6 1126.6 Q1096.6 1126 1098.6 1123.2 Q1096.4 1130.8 1088.6 1130.6 Q1080.8 1129.6 1080.6 1122 Q1080.6 1118.4 1083.4 1116.4 Z" fill="#eef6fc"/><path d="M1068.6 1124.4 Q1070.4 1119.8 1075.6 1119.4 Q1081.6 1119.8 1083.2 1125.6 L1084.4 1135.6 Q1076.4 1137 1070.6 1131.6 Q1068.8 1128.6 1068.6 1124.4 Z" fill="#2c9a45"/><path d="M1072.6 1134 Q1072.2 1124.4 1076.6 1122.4 Q1081 1124 1080.8 1135.6 Q1076.4 1136.2 1072.6 1134 Z" fill="#2b211c"/><ellipse cx="1076.8" cy="1127.8" rx="2.3" ry="3" fill="#eac6a6"/><path d="M1074 1131 Q1076.8 1133.6 1079.6 1131 L1079.8 1135.8 H1073.8 Z" fill="#f2d8c2"/>
<path d="M1134.6 1111 V1108.4 Q1134.6 1105.8 1137.2 1105.8 H1146.6 Q1149.2 1105.8 1149.2 1108.4 V1111" fill="none" stroke="#3aa7ea" stroke-width="2"/><path d="M1126.6 1109.6 H1157.2 V1131.4 Q1157.2 1135.4 1153.2 1135.4 H1130.6 Q1126.6 1135.4 1126.6 1131.4 Z" fill="#1b4f96"/><rect x="1135.8" y="1116" width="5.6" height="5.6" fill="#f25022"/><rect x="1142.4" y="1116" width="5.6" height="5.6" fill="#7fba00"/><rect x="1135.8" y="1122.6" width="5.6" height="5.6" fill="#00a4ef"/><rect x="1142.4" y="1122.6" width="5.6" height="5.6" fill="#ffb900"/>
<circle cx="1204.4" cy="1120" r="15" fill="#e4593a"/><path d="M1204.4 1105 A15 15 0 0 1 1219.4 1120 H1204.4 Z" fill="#f58b6c"/><path d="M1204.4 1120 H1219.4 A15 15 0 0 1 1204.4 1135 Z" fill="#d74827"/><rect x="1184.6" y="1111.6" width="16" height="16.4" rx="1.6" fill="#c43e1c"/>
<rect x="1250.4" y="1105.4" width="24.8" height="29.2" rx="1.8" fill="#2b7cd3"/><rect x="1250.4" y="1105.4" width="24.8" height="7.4" fill="#41a5ee"/><rect x="1250.4" y="1120" width="24.8" height="7.4" fill="#185abd"/><path d="M1250.4 1127.4 H1275.2 V1132.8 Q1275.2 1134.6 1273.4 1134.6 H1250.4 Z" fill="#103f91"/><rect x="1243.6" y="1111.6" width="16" height="16.4" rx="1.6" fill="#185abd"/>
<rect x="1309.4" y="1105.4" width="24.8" height="29.2" rx="1.8" fill="#21a366"/><rect x="1321.8" y="1105.4" width="12.4" height="7.4" fill="#33c481"/><rect x="1309.4" y="1112.8" width="12.4" height="7.4" fill="#107c41"/><rect x="1309.4" y="1120" width="12.4" height="7.4" fill="#185c37"/><rect x="1321.8" y="1120" width="12.4" height="7.4" fill="#107c41"/><path d="M1309.4 1127.4 H1334.2 V1132.8 Q1334.2 1134.6 1332.4 1134.6 H1309.4 Z" fill="#185c37"/><rect x="1302" y="1111.6" width="16" height="16.4" rx="1.6" fill="#107c41"/>
<path d="M1646.4 1124.6 L1654.4 1116.6 L1662.4 1124.6" fill="none" stroke="#1f1f1f" stroke-width="1.5" stroke-linecap="round" stroke-linejoin="round"/>
<path d="M1680 1126 Q1675.4 1125.6 1675.8 1121.2 Q1676.4 1117.8 1679.8 1117.8 Q1680.8 1112.6 1686 1112.4 Q1690.2 1112.6 1691.8 1116.4 Q1696.2 1115.6 1697 1120 Q1697.2 1123 1695 1124.4 L1690 1126 Z" fill="url(#gcl)" stroke="#1f1f1f" stroke-width="1.3" stroke-linejoin="round"/><circle cx="1691.3" cy="1125.2" r="5.6" fill="#f3f3f4"/><path d="M1687.4 1124 A4.1 4.1 0 0 1 1694.8 1122.6 M1695.2 1126.4 A4.1 4.1 0 0 1 1687.8 1127.8" fill="none" stroke="#1a7fd4" stroke-width="1.5"/><path d="M1695.6 1120.2 V1123 H1692.8 M1687 1130.2 V1127.4 H1689.8" fill="none" stroke="#1a7fd4" stroke-width="1.3"/>
<circle cx="1715" cy="1118.4" r="5.8" fill="#fdf6e3" stroke="#f1b63c" stroke-width="2.6"/><circle cx="1722.4" cy="1123.8" r="6.4" fill="#2aa84a"/><path d="M1719.4 1124 L1721.6 1126.2 L1725.4 1121.6" fill="none" stroke="#ffffff" stroke-width="1.5" stroke-linecap="round" stroke-linejoin="round"/>
<g fill="none" stroke="#1f1f1f" stroke-width="1.3"><circle cx="1814.2" cy="1119.8" r="9.7"/><ellipse cx="1814.2" cy="1119.8" rx="4.2" ry="9.7"/><path d="M1805.2 1116.2 H1823.2 M1805.2 1123.4 H1814"/><circle cx="1819.6" cy="1126.8" r="5" fill="#f3f3f4"/><path d="M1816.2 1130.2 L1823 1123.4"/></g>
<g fill="none" stroke="#1f1f1f" stroke-width="1.4" stroke-linejoin="round" stroke-linecap="round"><path d="M1837 1117 H1840.4 L1845.4 1112.6 V1128 L1840.4 1123.6 H1837 Z"/><path d="M1848.4 1116.8 Q1850.6 1120.2 1848.4 1123.8 M1851.2 1114 Q1855 1120.2 1851.2 1126.6"/><path d="M1854.4 1111.6 Q1859.4 1120.2 1854.4 1129" stroke="#b5b5b5"/></g>
<g fill="none" stroke="#1f1f1f" stroke-width="1.4" stroke-linejoin="round"><path d="M1876 1114.6 H1884.4 Q1886.4 1114.6 1886.4 1116.6 V1124 Q1886.4 1126 1884.4 1126 H1872.6"/><path d="M1886.8 1118.6 H1888.6 V1122 H1886.8" /><path d="M1872.6 1112.8 Q1866 1115 1867.4 1122 L1868.4 1125.8 M1872.6 1112.8 Q1876.6 1117.6 1872.2 1122.6 Q1870.2 1124.4 1868 1124.4" fill="#1f1f1f"/></g>
<path d="M2011.4 1111.2 Q2021.8 1114.4 2020 1122.2 Q2017.8 1129.8 2010 1129.2 Q2005.6 1128.6 2003.6 1125.2 Q2011.2 1123.8 2012.8 1117.4 Q2013 1113.8 2011.4 1111.2 Z" fill="none" stroke="#1f1f1f" stroke-width="1.4" stroke-linejoin="round"/>
</svg>

<span id="t0" style="left:73.12px;top:292px;font-size:17.2px;color:#1e7145;">A</span>
<span id="t1" style="left:158.42px;top:292px;font-size:17.2px;color:#444444;">B</span>
<span id="t2" style="left:243.24px;top:292px;font-size:17.2px;color:#444444;">C</span>
<span id="t3" style="left:328.54px;top:292px;font-size:17.2px;color:#444444;">D</span>
<span id="t4" style="left:414.32px;top:292px;font-size:17.2px;color:#444444;">E</span>
<span id="t5" style="left:500.10px;top:292px;font-size:17.2px;color:#444444;">F</span>
<span id="t6" style="left:583.96px;top:292px;font-size:17.2px;color:#444444;">G</span>
<span id="t7" style="left:669.74px;top:292px;font-size:17.2px;color:#444444;">H</span>
<span id="t8" style="left:758.86px;top:292px;font-size:17.2px;color:#444444;">I</span>
<span id="t9" style="left:842.25px;top:292px;font-size:17.2px;color:#444444;">J</span>
<span id="t10" style="left:926.12px;top:292px;font-size:17.2px;color:#444444;">K</span>
<span id="t11" style="left:1012.37px;top:292px;font-size:17.2px;color:#444444;">L</span>
<span id="t12" style="left:1095.29px;top:292px;font-size:17.2px;color:#444444;">M</span>
<span id="t13" style="left:1181.54px;top:292px;font-size:17.2px;color:#444444;">N</span>
<span id="t14" style="left:1266.36px;top:292px;font-size:17.2px;color:#444444;">O</span>
<span id="t15" style="left:1352.62px;top:292px;font-size:17.2px;color:#444444;">P</span>
<span id="t16" style="left:1436.96px;top:292px;font-size:17.2px;color:#444444;">Q</span>
<span id="t17" style="left:1522.74px;top:292px;font-size:17.2px;color:#444444;">R</span>
<span id="t18" style="left:1608.52px;top:292px;font-size:17.2px;color:#444444;">S</span>
<span id="t19" style="left:1694.30px;top:292px;font-size:17.2px;color:#444444;">T</span>
<span id="t20" style="left:1778.64px;top:292px;font-size:17.2px;color:#444444;">U</span>
<span id="t21" style="left:1864.42px;top:292px;font-size:17.2px;color:#444444;">V</span>
<span id="t22" style="left:1947.33px;top:292px;font-size:17.2px;color:#444444;">W</span>
<span id="t23" style="left:12.93px;top:318px;font-size:16.8px;color:#1e7145;">1</span>
<span id="t24" style="left:12.93px;top:344px;font-size:16.8px;color:#444444;">2</span>
<span id="t25" style="left:12.93px;top:370px;font-size:16.8px;color:#444444;">3</span>
<span id="t26" style="left:12.93px;top:395px;font-size:16.8px;color:#444444;">4</span>
<span id="t27" style="left:12.93px;top:421px;font-size:16.8px;color:#444444;">5</span>
<span id="t28" style="left:12.93px;top:446px;font-size:16.8px;color:#444444;">6</span>
<span id="t29" style="left:12.93px;top:472px;font-size:16.8px;color:#444444;">7</span>
<span id="t30" style="left:12.93px;top:498px;font-size:16.8px;color:#444444;">8</span>
<span id="t31" style="left:12.93px;top:523px;font-size:16.8px;color:#444444;">9</span>
<span id="t32" style="left:8.70px;top:549px;font-size:16.8px;color:#444444;transform:scaleX(0.9533);">10</span>
<span id="t33" style="left:8.70px;top:574px;font-size:16.8px;color:#444444;transform:scaleX(1.0217);">11</span>
<span id="t34" style="left:8.70px;top:600px;font-size:16.8px;color:#444444;transform:scaleX(0.9533);">12</span>
<span id="t35" style="left:8.70px;top:626px;font-size:16.8px;color:#444444;transform:scaleX(0.9533);">13</span>
<span id="t36" style="left:8.70px;top:651px;font-size:16.8px;color:#444444;transform:scaleX(0.9533);">14</span>
<span id="t37" style="left:8.70px;top:677px;font-size:16.8px;color:#444444;transform:scaleX(0.9533);">15</span>
<span id="t38" style="left:8.70px;top:702px;font-size:16.8px;color:#444444;transform:scaleX(0.9533);">16</span>
<span id="t39" style="left:8.70px;top:728px;font-size:16.8px;color:#444444;transform:scaleX(0.9533);">17</span>
<span id="t40" style="left:8.70px;top:754px;font-size:16.8px;color:#444444;transform:scaleX(0.9533);">18</span>
<span id="t41" style="left:8.70px;top:779px;font-size:16.8px;color:#444444;transform:scaleX(0.9533);">19</span>
<span id="t42" style="left:8.70px;top:805px;font-size:16.8px;color:#444444;transform:scaleX(0.9533);">20</span>
<span id="t43" style="left:8.70px;top:830px;font-size:16.8px;color:#444444;transform:scaleX(0.9533);">21</span>
<span id="t44" style="left:8.70px;top:856px;font-size:16.8px;color:#444444;transform:scaleX(0.9533);">22</span>
<span id="t45" style="left:8.70px;top:882px;font-size:16.8px;color:#444444;transform:scaleX(0.9533);">23</span>
<span id="t46" style="left:8.70px;top:907px;font-size:16.8px;color:#444444;transform:scaleX(0.9533);">24</span>
<span id="t47" style="left:8.70px;top:933px;font-size:16.8px;color:#444444;transform:scaleX(0.9533);">25</span>
<span id="t48" style="left:8.70px;top:958px;font-size:16.8px;color:#444444;transform:scaleX(0.9533);">26</span>
<span id="t49" style="left:8.70px;top:984px;font-size:16.8px;color:#444444;transform:scaleX(0.9533);">27</span>
<span id="t50" style="left:8.70px;top:1010px;font-size:16.8px;color:#444444;transform:scaleX(0.9533);">28</span>
<span id="t51" style="left:24.43px;top:27px;font-size:11px;color:#ffffff;font-weight:700;">X</span>
<span id="t52" style="left:64.00px;top:24px;font-size:17px;color:#303030;transform:scaleX(0.9019);">AutoSave</span>
<span id="t53" style="left:170.00px;top:24px;font-size:14px;color:#333333;transform:scaleX(1.0042);">Off</span>
<span id="t54" style="left:255.80px;top:24px;font-size:17px;color:#303030;transform:scaleX(0.8921);">Book2</span>
<span id="t55" style="left:309.10px;top:24px;font-size:17px;color:#303030;transform:scaleX(0.8815);">-</span>
<span id="t56" style="left:323.80px;top:24px;font-size:17px;color:#303030;transform:scaleX(0.8466);">Excel</span>
<span id="t57" style="left:823.50px;top:23px;font-size:17px;color:#6a6a6a;transform:scaleX(1.0540);">Search (Alt+Q)</span>
<span id="t58" style="left:1673.50px;top:25px;font-size:16.6px;color:#303030;transform:scaleX(0.9708);">Maribeth Manuel</span>
<span id="t59" style="left:1812.55px;top:25px;font-size:14px;color:#bfe6d6;transform:scaleX(0.9645);">MM</span>
<span id="t60" style="left:28.00px;top:76px;font-size:17.6px;color:#303030;transform:scaleX(0.9344);">File</span>
<span id="t61" style="left:90.00px;top:76px;font-size:17.6px;color:#303030;transform:scaleX(1.0312);">Home</span>
<span id="t62" style="left:164.60px;top:76px;font-size:17.6px;color:#303030;transform:scaleX(1.0224);">Insert</span>
<span id="t63" style="left:236.00px;top:76px;font-size:17.6px;color:#303030;">Page Layout</span>
<span id="t64" style="left:360.70px;top:76px;font-size:17.6px;color:#303030;">Formulas</span>
<span id="t65" style="left:460.00px;top:76px;font-size:17.6px;color:#303030;transform:scaleX(1.0115);">Data</span>
<span id="t66" style="left:524.00px;top:76px;font-size:17.6px;color:#303030;transform:scaleX(0.9621);">Review</span>
<span id="t67" style="left:606.00px;top:76px;font-size:17.6px;color:#1a1a1a;transform:scaleX(1.0310);-webkit-text-stroke:0.35px #1a1a1a;">View</span>
<span id="t68" style="left:669.60px;top:76px;font-size:17.6px;color:#303030;transform:scaleX(1.0225);">Help</span>
<span id="t69" style="left:1829.50px;top:76px;font-size:17.2px;color:#1f1f1f;transform:scaleX(1.0651);-webkit-text-stroke:0.6px #1f1f1f;">Comments</span>
<span id="t70" style="left:1973.80px;top:76px;font-size:17.2px;color:#ffffff;transform:scaleX(0.9853);-webkit-text-stroke:0.6px #ffffff;">Share</span>
<span id="t71" style="left:18.20px;top:255px;font-size:16.2px;color:#303030;transform:scaleX(0.9691);">A1</span>
<span id="t72" style="left:244.60px;top:250px;font-size:23.5px;color:#2a2a2a;font-family:'Liberation Serif', serif;font-style:italic;transform:scaleX(1.1079);-webkit-text-stroke:0.45px #2a2a2a;">fx</span>
<span id="t73" style="left:123.80px;top:1032px;font-size:17.8px;color:#444444;transform:scaleX(0.9581);">Sheet1</span>
<span id="t74" style="left:208.00px;top:1032px;font-size:17.8px;color:#444444;transform:scaleX(0.9759);">Sheet2</span>
<span id="t75" style="left:291.50px;top:1032px;font-size:17.8px;color:#1e7145;font-weight:700;transform:scaleX(0.9912);">Sheet3</span>
<span id="t76" style="left:10.60px;top:1068px;font-size:14px;color:#3a3a3a;transform:scaleX(0.9489);">Ready</span>
<span id="t77" style="left:2004.60px;top:1069px;font-size:13.6px;color:#3a3a3a;transform:scaleX(0.9085);">100%</span>
<span id="t78" style="left:157.00px;top:217px;font-size:13.4px;color:#3a3a3a;">Sheet View</span>
<span id="t79" style="left:457.00px;top:217px;font-size:13.4px;color:#3a3a3a;transform:scaleX(1.0379);">Workbook Views</span>
<span id="t80" style="left:756.50px;top:217px;font-size:13.4px;color:#3a3a3a;transform:scaleX(0.9851);">Show</span>
<span id="t81" style="left:981.30px;top:217px;font-size:13.4px;color:#3a3a3a;transform:scaleX(1.0516);">Zoom</span>
<span id="t82" style="left:1392.30px;top:217px;font-size:13.4px;color:#3a3a3a;transform:scaleX(1.0495);">Window</span>
<span id="t83" style="left:1747.50px;top:217px;font-size:13.4px;color:#3a3a3a;transform:scaleX(1.0545);">Macros</span>
<span id="t84" style="left:30.50px;top:128px;font-size:15.4px;color:#c6c6c6;transform:scaleX(1.0458);">Default</span>
<span id="t85" style="left:58.80px;top:171px;font-size:15.4px;color:#c6c6c6;transform:scaleX(0.9902);">Keep</span>
<span id="t86" style="left:141.40px;top:171px;font-size:15.4px;color:#c6c6c6;transform:scaleX(0.9510);">Exit</span>
<span id="t87" style="left:213.00px;top:171px;font-size:15.4px;color:#c6c6c6;transform:scaleX(0.9936);">New</span>
<span id="t88" style="left:290.60px;top:171px;font-size:15.4px;color:#c6c6c6;transform:scaleX(1.0368);">Options</span>
<span id="t89" style="left:381.20px;top:161px;font-size:15.4px;color:#303030;transform:scaleX(1.0563);">Normal</span>
<span id="t90" style="left:441.90px;top:161px;font-size:15.4px;color:#303030;transform:scaleX(0.9722);">Page Break</span>
<span id="t91" style="left:453.80px;top:183px;font-size:15.4px;color:#303030;transform:scaleX(0.9826);">Preview</span>
<span id="t92" style="left:535.60px;top:161px;font-size:15.4px;color:#303030;transform:scaleX(0.9401);">Page</span>
<span id="t93" style="left:529.40px;top:183px;font-size:15.4px;color:#303030;">Layout</span>
<span id="t94" style="left:584.75px;top:161px;font-size:15.4px;color:#303030;transform:scaleX(0.9900);">Custom</span>
<span id="t95" style="left:591.20px;top:183px;font-size:15.4px;color:#303030;transform:scaleX(0.9808);">Views</span>
<span id="t96" style="left:690.60px;top:128px;font-size:15.4px;color:#c6c6c6;transform:scaleX(0.9679);">Ruler</span>
<span id="t97" style="left:792.00px;top:128px;font-size:15.4px;color:#303030;transform:scaleX(1.0039);">Formula Bar</span>
<span id="t98" style="left:690.40px;top:171px;font-size:15.4px;color:#303030;transform:scaleX(1.0110);">Gridlines</span>
<span id="t99" style="left:792.00px;top:171px;font-size:15.4px;color:#303030;transform:scaleX(1.0241);">Headings</span>
<span id="t100" style="left:914.00px;top:161px;font-size:15.4px;color:#303030;transform:scaleX(1.0675);">Zoom</span>
<span id="t101" style="left:991.60px;top:140px;font-size:13.6px;color:#ffffff;transform:scaleX(0.8815);">100</span>
<span id="t102" style="left:975.00px;top:161px;font-size:15.4px;color:#303030;transform:scaleX(0.9397);">100%</span>
<span id="t103" style="left:1027.25px;top:161px;font-size:15.4px;color:#303030;transform:scaleX(1.0859);">Zoom to</span>
<span id="t104" style="left:1025.60px;top:183px;font-size:15.4px;color:#303030;transform:scaleX(1.0138);">Selection</span>
<span id="t105" style="left:1131.30px;top:161px;font-size:15.4px;color:#303030;transform:scaleX(0.9936);">New</span>
<span id="t106" style="left:1117.20px;top:183px;font-size:15.4px;color:#303030;transform:scaleX(1.0630);">Window</span>
<span id="t107" style="left:1183.55px;top:161px;font-size:15.4px;color:#303030;transform:scaleX(1.0134);">Arrange</span>
<span id="t108" style="left:1202.60px;top:183px;font-size:15.4px;color:#303030;transform:scaleX(1.0521);">All</span>
<span id="t109" style="left:1251.50px;top:161px;font-size:15.4px;color:#303030;transform:scaleX(0.9393);">Freeze</span>
<span id="t110" style="left:1247.50px;top:183px;font-size:15.4px;color:#303030;transform:scaleX(0.8891);">Panes</span>
<span id="t111" style="left:1339.00px;top:117px;font-size:15.4px;color:#303030;transform:scaleX(1.0550);">Split</span>
<span id="t112" style="left:1339.00px;top:152px;font-size:15.4px;color:#303030;transform:scaleX(1.0551);">Hide</span>
<span id="t113" style="left:1339.00px;top:186px;font-size:15.4px;color:#c6c6c6;transform:scaleX(1.0127);">Unhide</span>
<span id="t114" style="left:1448.80px;top:117px;font-size:15.4px;color:#303030;transform:scaleX(1.0131);">View Side by Side</span>
<span id="t115" style="left:1448.80px;top:152px;font-size:15.4px;color:#c6c6c6;">Synchronous Scrolling</span>
<span id="t116" style="left:1448.80px;top:186px;font-size:15.4px;color:#c6c6c6;transform:scaleX(1.0173);">Reset Window Position</span>
<span id="t117" style="left:1656.90px;top:161px;font-size:15.4px;color:#303030;">Switch</span>
<span id="t118" style="left:1640.10px;top:183px;font-size:15.4px;color:#303030;transform:scaleX(1.0218);">Windows</span>
<span id="t119" style="left:1746.50px;top:163px;font-size:15.4px;color:#303030;transform:scaleX(1.0066);">Macros</span>
<span id="t120" style="left:1188.13px;top:1114px;font-size:13.4px;color:#ffffff;font-weight:700;">P</span>
<span id="t121" style="left:1245.40px;top:1114px;font-size:13px;color:#ffffff;font-weight:700;transform:scaleX(1.0097);">W</span>
<span id="t122" style="left:1305.66px;top:1114px;font-size:13px;color:#ffffff;font-weight:700;">X</span>
<span id="t123" style="left:1749.20px;top:1103px;font-size:15.6px;color:#1f1f1f;transform:scaleX(0.8995);">ENG</span>
<span id="t124" style="left:1754.90px;top:1123px;font-size:15.6px;color:#1f1f1f;transform:scaleX(0.8767);">US</span>
<span id="t125" style="left:1933.00px;top:1101px;font-size:15.4px;color:#1f1f1f;transform:scaleX(1.0247);">4:33 pm</span>
<span id="t126" style="left:1910.40px;top:1123px;font-size:15.4px;color:#1f1f1f;transform:scaleX(1.0282);">10/03/2022</span>
</div></body></html>
